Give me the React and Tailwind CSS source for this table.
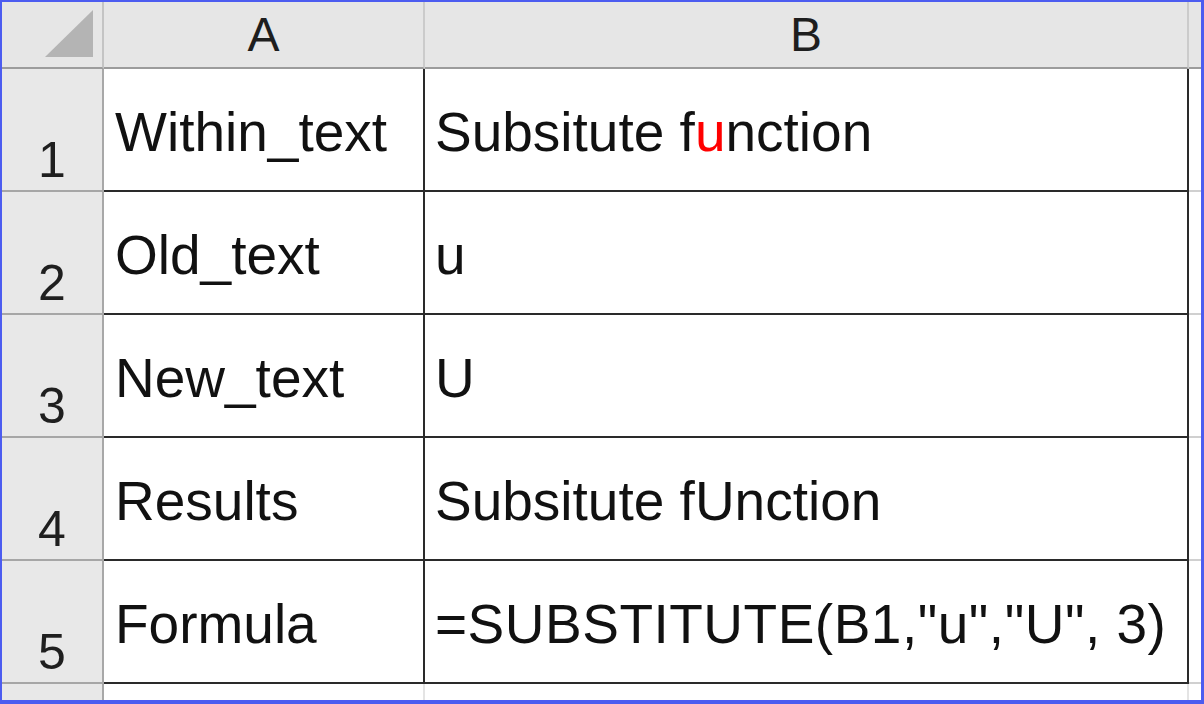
import React from "react";

const rows = [
  { n: "1", a: "Within_text", b: <>Subsitute f<span className="text-[#ff0000]">u</span>nction</> },
  { n: "2", a: "Old_text", b: "u" },
  { n: "3", a: "New_text", b: "U" },
  { n: "4", a: "Results", b: "Subsitute fUnction" },
  { n: "5", a: "Formula", b: '=SUBSTITUTE(B1,"u","U", 3)', wide: true },
];

const font = { fontFamily: '"Liberation Sans", Arial, sans-serif' };

export default function App() {
  return (
    <div
      className="w-[1204px] h-[704px] box-border border-t-2 border-l-2 border-r-[3px] border-b-4 border-[#4c5cf0] bg-white overflow-hidden"
      style={font}
    >
      <div className="grid grid-cols-[102px_321px_764px_1fr] grid-rows-[67px_repeat(5,123px)_1fr] h-full">
        {/* header row */}
        <div className="bg-[#e6e6e6] border-r-2 border-b-2 border-r-[#c4c4c4] border-b-[#9c9c9c] relative">
          <svg className="absolute left-0 top-0" width="100" height="65" viewBox="0 0 100 65">
            <polygon points="43,55 91,55 91,8" fill="#b4b4b4" />
          </svg>
        </div>
        <div className="bg-[#e6e6e6] border-r-2 border-b-2 border-r-[#cbcbcb] border-b-[#9c9c9c] flex justify-center pt-[9px] text-[48px] leading-none text-[#1e1e1e]">
          A
        </div>
        <div className="bg-[#e6e6e6] border-r-2 border-b-2 border-r-[#cbcbcb] border-b-[#9c9c9c] flex justify-center pt-[9px] text-[48px] leading-none text-[#1e1e1e]">
          B
        </div>
        <div className="bg-[#e6e6e6] border-b-2 border-b-[#9c9c9c]" />

        {rows.map((r) => (
          <React.Fragment key={r.n}>
            <div className="bg-[#e8e8e8] border-r-2 border-b-2 border-r-[#a8a8a8] border-b-[#a6a6a6] flex justify-center pt-[66px] text-[50px] leading-none text-[#1f1f1f]">
              {r.n}
            </div>
            <div className="border-r-2 border-b-2 border-[#2a2a2a] pl-[11px] pt-[36px] text-[55px] leading-none text-[#111111] whitespace-nowrap">
              {r.a}
            </div>
            <div
              className={
                r.wide
                  ? "border-r-2 border-b-2 border-[#2a2a2a] pl-[10px] pt-[36px] text-[55px] leading-none text-[#111111] whitespace-nowrap tracking-[0.5px]"
                  : "border-r-2 border-b-2 border-[#2a2a2a] pl-[10px] pt-[36px] text-[55px] leading-none text-[#111111] whitespace-nowrap"
              }
            >
              {r.b}
            </div>
            <div className="border-b-2 border-b-[#d0d0d0]" />
          </React.Fragment>
        ))}

        {/* bottom strip */}
        <div className="bg-[#e8e8e8] border-r-2 border-r-[#a8a8a8]" />
        <div className="border-r-2 border-r-[#e4e4e4]" />
        <div className="border-r-2 border-r-[#e4e4e4]" />
        <div />
      </div>
    </div>
  );
}
